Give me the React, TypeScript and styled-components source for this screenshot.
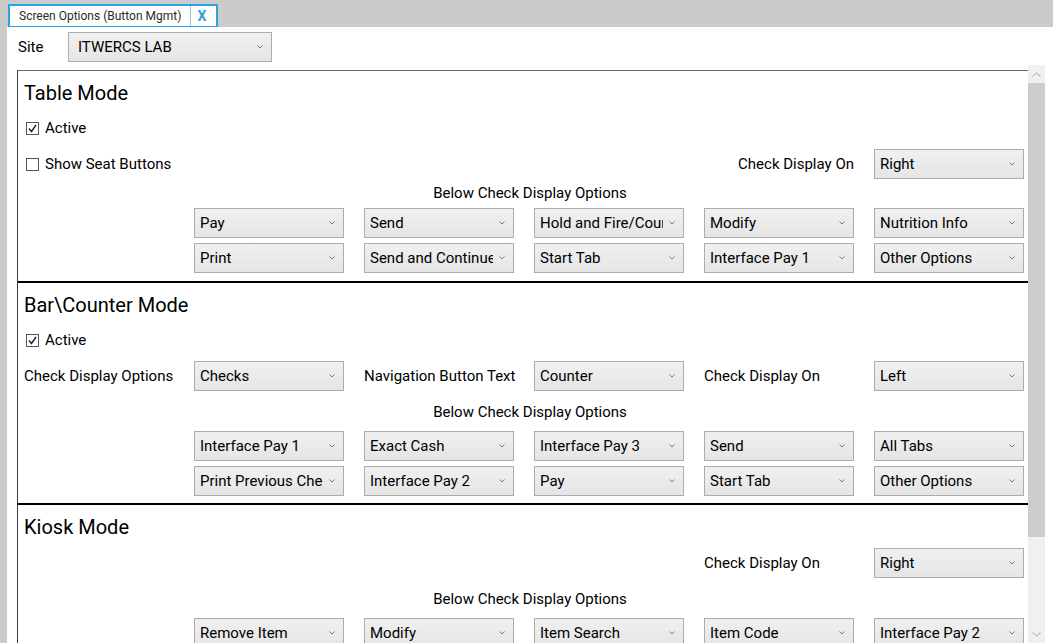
import React from 'react';
import styled, { createGlobalStyle } from 'styled-components';

const GlobalStyle = createGlobalStyle`
  html, body {
    margin: 0;
    padding: 0;
  }
  body {
    font-family: Roboto, 'Liberation Sans', sans-serif;
    color: #000;
    overflow: hidden;
  }
`;

const Page = styled.div`
  width: 1053px;
  height: 643px;
  display: flex;
  flex-direction: column;
  background: #cbcbcb;
  overflow: hidden;
`;

const TabStrip = styled.div`
  height: 27px;
  box-sizing: border-box;
  padding: 4px 0 0 8px;
  display: flex;
  flex: none;
`;

const Tab = styled.div`
  height: 23px;
  box-sizing: border-box;
  border: 2px solid #2aa3e2;
  border-bottom-width: 1px;
  background: #fff;
  display: flex;
  align-items: stretch;
  font-size: 12px;
`;

const TabTitle = styled.div`
  display: flex;
  align-items: center;
  padding: 0 9px 0 9px;
  color: #2a2a2a;
  border-right: 1px solid #8ccbec;
`;

const TabClose = styled.div`
  display: flex;
  align-items: center;
  padding: 0 10px 0 6px;
  color: #2aa3e2;
  font-size: 14px;
  font-weight: 700;
`;

const Body = styled.div`
  flex: 1;
  display: flex;
  padding-left: 7px;
  min-height: 0;
`;

const Content = styled.div`
  flex: 1;
  background: #fff;
  display: flex;
  flex-direction: column;
  min-height: 0;
`;

const SiteRow = styled.div`
  display: flex;
  align-items: center;
  margin-top: 5px;
  padding-left: 11px;
  font-size: 15px;
`;

const SiteLabel = styled.div`
  width: 50px;
`;

const PanelRow = styled.div`
  flex: 1;
  display: flex;
  margin-top: 3px;
  padding: 0 8px 0 10px;
  min-height: 0;
`;

const Panel = styled.div`
  flex: 1;
  margin-top: 5px;
  border-top: 1px solid #6a6a6a;
  border-left: 1px solid #3c3c3c;
  overflow: hidden;
`;

const Section = styled.div<{ $pb: number; $last?: boolean }>`
  padding: 0 0 ${(p) => p.$pb}px 6px;
  border-bottom: ${(p) => (p.$last ? 'none' : '2px solid #000')};
`;

const Title = styled.div`
  margin-top: 10px;
  font-size: 20px;
  line-height: 24px;
`;

const CheckRow = styled.label<{ $mt?: number }>`
  display: flex;
  align-items: center;
  gap: 6px;
  height: 20px;
  margin-top: ${(p) => p.$mt || 0}px;
  padding-left: 2px;
  font-size: 15px;
`;

const Box = styled.span`
  width: 13px;
  height: 13px;
  box-sizing: border-box;
  border: 1px solid #555;
  background: #fff;
  display: flex;
  align-items: center;
  justify-content: center;
`;

const Grid = styled.div<{ $mt: number }>`
  display: grid;
  grid-template-columns: repeat(6, 150px);
  grid-auto-rows: 30px;
  column-gap: 20px;
  row-gap: 5px;
  margin-top: ${(p) => p.$mt}px;
`;

const Label = styled.div<{ $end?: boolean; $col: number }>`
  grid-column: ${(p) => p.$col};
  display: flex;
  align-items: center;
  justify-content: ${(p) => (p.$end ? 'flex-end' : 'flex-start')};
  font-size: 15px;
  white-space: nowrap;
`;

const Below = styled.div<{ $mt: number }>`
  margin-top: ${(p) => p.$mt}px;
  height: 20px;
  line-height: 20px;
  font-size: 15px;
  text-align: center;
  width: 1000px;
  padding-left: 12px;
  box-sizing: border-box;
`;

const ComboBox = styled.div<{ $w?: number; $pl?: number; $col?: number }>`
  ${(p) => (p.$col ? `grid-column: ${p.$col};` : '')}
  width: ${(p) => p.$w || 150}px;
  height: 30px;
  box-sizing: border-box;
  border: 1px solid #acacac;
  background: linear-gradient(#f0f0f0, #e5e5e5);
  display: flex;
  align-items: center;
  padding: 0 8px 0 ${(p) => p.$pl || 5}px;
  font-size: 15px;
`;

const ComboText = styled.span`
  flex: 1;
  overflow: hidden;
  white-space: nowrap;
  margin-right: 6px;
`;

const ScrollBar = styled.div`
  width: 17px;
  background: #f0f0f0;
  display: flex;
  flex-direction: column;
`;

const ScrollArrow = styled.div`
  height: 18px;
  display: flex;
  align-items: center;
  justify-content: center;
  flex: none;
`;

const Thumb = styled.div`
  height: 454px;
  background: #cdcdcd;
  flex: none;
`;

const Track = styled.div`
  flex: 1;
`;

function Chevron({ up, big }: { up?: boolean; big?: boolean }) {
  const w = big ? 9 : 6;
  const h = big ? 5 : 4;
  return (
    <svg width={w} height={h} viewBox={`0 0 ${w} ${h}`}>
      <polyline
        points={
          up
            ? `0.5,${h - 0.5} ${w / 2},1 ${w - 0.5},${h - 0.5}`
            : `0.5,0.5 ${w / 2},${h - 1} ${w - 0.5},0.5`
        }
        fill='none'
        stroke={big ? '#a0a0a0' : '#7a7a7a'}
        strokeWidth='1'
      />
    </svg>
  );
}

function Combo({
  text,
  col,
  w,
  pl,
}: {
  text: string;
  col?: number;
  w?: number;
  pl?: number;
}) {
  return (
    <ComboBox $col={col} $w={w} $pl={pl}>
      <ComboText>{text}</ComboText>
      <Chevron />
    </ComboBox>
  );
}

function Check({ label, checked, mt }: { label: string; checked?: boolean; mt?: number }) {
  return (
    <CheckRow $mt={mt}>
      <Box>
        {checked && (
          <svg width='9' height='9' viewBox='0 0 9 9'>
            <polyline points='1,4.5 3.5,7.5 8,1' fill='none' stroke='#222' strokeWidth='1.4' />
          </svg>
        )}
      </Box>
      {label}
    </CheckRow>
  );
}

function ButtonRows({ rows, mt }: { rows: string[][]; mt: number }) {
  return (
    <Grid $mt={mt}>
      {rows.map((row, r) =>
        row.map((text, i) => (
          <Combo key={r + '-' + i} text={text} col={i + 2} />
        ))
      )}
    </Grid>
  );
}

export default function App() {
  return (
    <Page>
      <GlobalStyle />
      <TabStrip>
        <Tab>
          <TabTitle>Screen Options (Button Mgmt)</TabTitle>
          <TabClose>X</TabClose>
        </Tab>
      </TabStrip>
      <Body>
        <Content>
          <SiteRow>
            <SiteLabel>Site</SiteLabel>
            <Combo text='ITWERCS LAB' w={204} pl={9} />
          </SiteRow>
          <PanelRow>
            <Panel>
              <Section $pb={8}>
                <Title>Table Mode</Title>
                <Check label='Active' checked mt={13} />
                <Grid $mt={11}>
                  <Label $col={1}>
                    <Check label='Show Seat Buttons' />
                  </Label>
                  <Label $col={5} $end>
                    Check Display On
                  </Label>
                  <Combo text='Right' col={6} />
                </Grid>
                <Below $mt={4}>Below Check Display Options</Below>
                <ButtonRows
                  mt={5}
                  rows={[
                    ['Pay', 'Send', 'Hold and Fire/Course', 'Modify', 'Nutrition Info'],
                    ['Print', 'Send and Continue', 'Start Tab', 'Interface Pay 1', 'Other Options'],
                  ]}
                />
              </Section>
              <Section $pb={7}>
                <Title>Bar\Counter Mode</Title>
                <Check label='Active' checked mt={13} />
                <Grid $mt={11}>
                  <Label $col={1}>Check Display Options</Label>
                  <Combo text='Checks' col={2} />
                  <Label $col={3}>Navigation Button Text</Label>
                  <Combo text='Counter' col={4} />
                  <Label $col={5}>Check Display On</Label>
                  <Combo text='Left' col={6} />
                </Grid>
                <Below $mt={11}>Below Check Display Options</Below>
                <ButtonRows
                  mt={9}
                  rows={[
                    ['Interface Pay 1', 'Exact Cash', 'Interface Pay 3', 'Send', 'All Tabs'],
                    ['Print Previous Check', 'Interface Pay 2', 'Pay', 'Start Tab', 'Other Options'],
                  ]}
                />
              </Section>
              <Section $pb={10} $last>
                <Title>Kiosk Mode</Title>
                <Grid $mt={9}>
                  <Label $col={5}>Check Display On</Label>
                  <Combo text='Right' col={6} />
                </Grid>
                <Below $mt={11}>Below Check Display Options</Below>
                <ButtonRows
                  mt={9}
                  rows={[['Remove Item', 'Modify', 'Item Search', 'Item Code', 'Interface Pay 2']]}
                />
              </Section>
            </Panel>
            <ScrollBar>
              <ScrollArrow>
                <Chevron up big />
              </ScrollArrow>
              <Thumb />
              <Track />
              <ScrollArrow>
                <Chevron big />
              </ScrollArrow>
            </ScrollBar>
          </PanelRow>
        </Content>
      </Body>
    </Page>
  );
}
